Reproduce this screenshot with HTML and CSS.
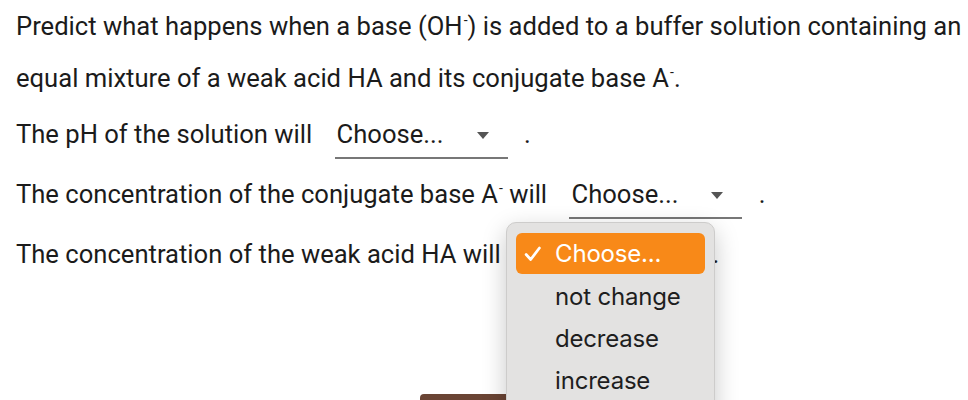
FILE: index.html
```html
<!DOCTYPE html>
<html lang="en">
<head>
<meta charset="utf-8">
<title>Buffer question</title>
<link rel="stylesheet" href="styles.css">
</head>
<body>
<main class="question">
  <p class="prompt">Predict what happens when a base (OH<sup class="charge">-</sup>) is added to a buffer solution containing an equal mixture of a weak acid HA and its conjugate base A<sup class="charge">-</sup>.</p>

  <div class="row">
    <span class="label">The pH of the solution will</span>
    <span class="select"><span class="select-text">Choose...</span><span class="arrow"></span></span>
    <span class="dot">.</span>
  </div>

  <div class="row">
    <span class="label">The concentration of the conjugate base A<sup class="charge">-</sup> will</span>
    <span class="select"><span class="select-text">Choose...</span><span class="arrow"></span></span>
    <span class="dot">.</span>
  </div>

  <div class="row">
    <span class="label">The concentration of the weak acid HA will</span>
    <span class="select open"><span class="select-text">Choose...</span><span class="arrow"></span>
      <ul class="menu">
        <li class="item selected"><svg class="check" viewBox="0 0 24 24" width="22" height="22"><path d="M4.5 12.5 L9.5 18 L19 5.5" fill="none" stroke="#fff" stroke-width="3" stroke-linecap="round" stroke-linejoin="round"/></svg>Choose...</li>
        <li class="item">not change</li>
        <li class="item">decrease</li>
        <li class="item">increase</li>
      </ul>
    </span>
    <span class="dot">.</span>
  </div>

  <div class="actions">
    <button class="check-btn" type="button">Check</button>
  </div>
</main>
</body>
</html>
```

FILE: styles.css
```css
html, body {
  margin: 0;
  padding: 0;
  background: #ffffff;
}

body {
  font-family: Roboto, "Liberation Sans", Arial, sans-serif;
  color: #1b1b1b;
  font-size: 25.6px;
}

.question {
  padding: 0 0 0 16px;
}

.prompt {
  margin: 0;
  line-height: 52px;
}

.charge {
  font-size: 14px;
  line-height: 0;
  vertical-align: 10px;
  margin-left: 1px;
}

.row {
  line-height: 28px;
  margin-top: 21px;
  white-space: nowrap;
}

.row:first-of-type {
  margin-top: 16px;
}

.select {
  display: inline-block;
  position: relative;
  width: 173px;
  box-sizing: border-box;
  margin-left: 16px;
  padding: 0 0 9px 2px;
  border-bottom: 2px solid #777777;
  vertical-align: top;
}

.arrow {
  position: absolute;
  right: 19px;
  top: 12px;
  width: 0;
  height: 0;
  border-left: 6px solid transparent;
  border-right: 6px solid transparent;
  border-top: 7px solid #555555;
}

.dot {
  margin-left: 10px;
}

.menu {
  position: absolute;
  left: -17px;
  top: -18px;
  width: 209px;
  height: 200px;
  box-sizing: border-box;
  margin: 0;
  padding: 10px 9px;
  list-style: none;
  background: #e3e2e1;
  border: 1px solid #cdcccb;
  border-radius: 10px;
  box-shadow: 0 8px 24px rgba(0, 0, 0, 0.22);
  font-family: Inter, Roboto, "Liberation Sans", sans-serif;
  font-size: 24px;
  color: #1e1e1e;
  z-index: 5;
}

.item {
  height: 42px;
  line-height: 42px;
  padding-left: 39px;
  border-radius: 6px;
  letter-spacing: -0.2px;
}

.item.selected {
  position: relative;
  height: 41px;
  line-height: 41px;
  margin-bottom: 2px;
  background: #f88918;
  color: #ffffff;
}

.check {
  position: absolute;
  left: 6px;
  top: 10px;
}

.actions {
  display: flex;
  justify-content: center;
  margin-top: 115px;
  padding-right: 16px;
}

.check-btn {
  width: 128px;
  height: 56px;
  padding-top: 16px;
  border: none;
  border-radius: 4px;
  background: #6a4434;
  color: #ffffff;
  font-family: Roboto, sans-serif;
  font-size: 18px;
}
```
